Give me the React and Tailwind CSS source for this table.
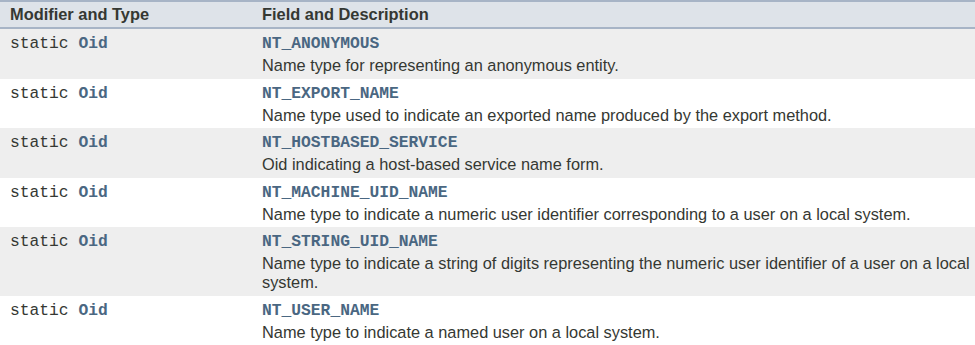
const rows = [
  {
    name: "NT_ANONYMOUS",
    desc: "Name type for representing an anonymous entity.",
  },
  {
    name: "NT_EXPORT_NAME",
    desc: "Name type used to indicate an exported name produced by the export method.",
  },
  {
    name: "NT_HOSTBASED_SERVICE",
    desc: "Oid indicating a host-based service name form.",
  },
  {
    name: "NT_MACHINE_UID_NAME",
    desc: "Name type to indicate a numeric user identifier corresponding to a user on a local system.",
  },
  {
    name: "NT_STRING_UID_NAME",
    desc: "Name type to indicate a string of digits representing the numeric user identifier of a user on a local system.",
  },
  {
    name: "NT_USER_NAME",
    desc: "Name type to indicate a named user on a local system.",
  },
];

export default function App() {
  return (
    <div className="w-[975px] h-[345px] overflow-hidden bg-white text-[#353833] font-['Liberation_Sans',Arial,sans-serif]">
      {/* table header */}
      <div className="flex h-[29px] items-center border-t-2 border-b-2 border-[#a7b4c6] bg-[#dee3e9] text-[16.4px] font-bold">
        <div className="w-[252px] shrink-0 pl-[10px]">Modifier and Type</div>
        <div className="pl-[10px]">Field and Description</div>
      </div>

      {rows.map((row, i) => (
        <div
          key={row.name}
          className={`flex pt-[6px] pb-[3.5px] ${i % 2 === 0 ? "bg-[#eeeeee]" : "bg-white"}`}
        >
          <div className="w-[252px] shrink-0 pl-[10px] font-['Liberation_Mono','Courier_New',monospace] text-[16.3px] leading-[18px]">
            static <span className="font-bold text-[#4a6782]">Oid</span>
          </div>
          <div className="flex-1 pl-[10px]">
            <div className="mb-[3px] font-['Liberation_Mono','Courier_New',monospace] text-[16.3px] font-bold leading-[18px] text-[#4a6782]">
              {row.name}
            </div>
            <div className="text-[16.35px] leading-[19px]">{row.desc}</div>
          </div>
        </div>
      ))}
    </div>
  );
}
